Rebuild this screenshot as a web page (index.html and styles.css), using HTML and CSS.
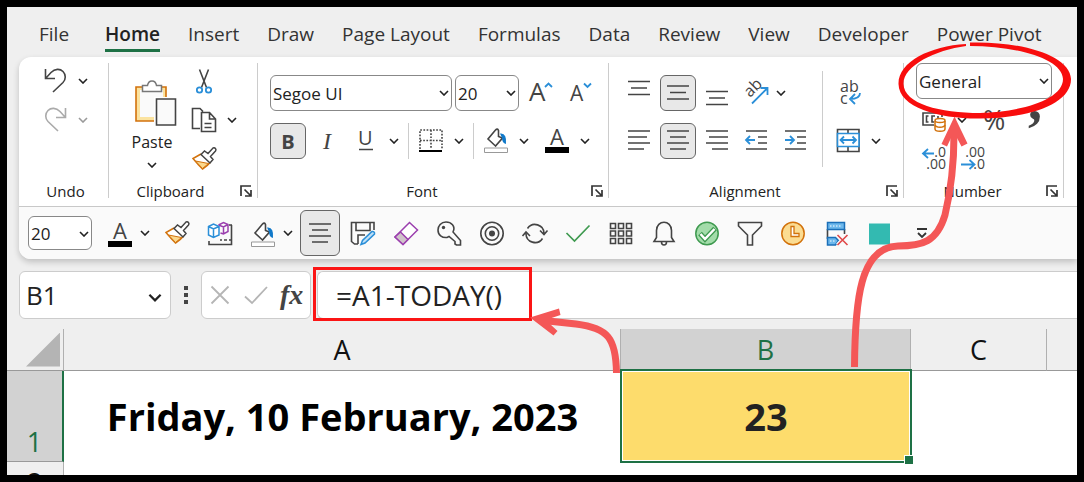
FILE: index.html
```
<!DOCTYPE html>
<html lang="en">
<head>
  <meta charset="UTF-8">
  <title>Excel - Days Until Date</title>
  <meta name="viewport" content="width=device-width, initial-scale=1.0">
  <link rel="stylesheet" href="styles.css">
</head>

<body>

<!-- icons used more than once -->
<svg class="sprite" aria-hidden="true">
  <symbol id="chevron" viewBox="0 0 10 6"><path d="M1 1l4 4 4-4" fill="none" stroke="currentColor" stroke-width="1.600"/></symbol>
  <symbol id="launcher" viewBox="0 0 12 12"><path d="M1 11V1h10M4.500 4.500l6 6M11 5v6H5" fill="none" stroke="#333" stroke-width="1.700"/></symbol>
  <symbol id="brush" viewBox="0 0 36 36">
    <path d="M15 13L7 17.500q5 6 9.500 10.500 5-3 8-7" fill="#fff" stroke="#d2720c" stroke-width="1.500"/>
    <path d="M9.500 20l13 2.500-6 5z" fill="#fbd98e" stroke="#d2720c"/>
    <path d="M15 13.500l3.500-3.500 3.500 2.500 5-5.500a2 2 0 0 1 2.500 3l-5 5.500 2.500 3-3 3.500z" fill="#fff" stroke="#444" stroke-width="1.500"/>
  </symbol>
  <symbol id="fill" viewBox="0 0 36 36">
    <path d="M17.500 23L10 16l7.500-9q2-2 3 .5v6l4 1.500z" fill="#fff" stroke="#444" stroke-width="1.600"/>
    <path d="M22 10.500q7-1 6 10.500-4-1-4-6z" fill="#1179c9"/>
    <path d="M6.500 25h23v4.500h-23z" fill="#fff" stroke="#999"/>
  </symbol>
  <symbol id="color" viewBox="0 0 36 36">
    <text x="11" y="22" font-size="22" fill="#444">A</text>
    <path d="M6 24h24v6H6z"/>
  </symbol>
</svg>

<div class="window">

  <nav class="tabs">
    <a href="#">File</a>
    <a href="#" class="current">Home</a>
    <a href="#">Insert</a>
    <a href="#">Draw</a>
    <a href="#">Page Layout</a>
    <a href="#">Formulas</a>
    <a href="#">Data</a>
    <a href="#">Review</a>
    <a href="#">View</a>
    <a href="#">Developer</a>
    <a href="#">Power Pivot</a>
  </nav>

  <div class="ribbon">
    <div class="groups">

      <section class="group undo">
        <div class="stack">
          <div class="row">
            <button class="tool" aria-label="Undo"><svg viewBox="0 0 36 36"><path d="M8.500 6v9.500h9.500M9 15l5-5.500c4-4 9-4 12-1s3 8 0 11L16 29" class="ink"/></svg></button>
            <button class="more" aria-label="Undo list"><svg><use href="#chevron"/></svg></button>
          </div>
          <div class="row faded">
            <button class="tool" aria-label="Redo"><svg viewBox="0 0 36 36"><path d="M28.500 6v9.500h-9.500M28 15l-5-5.500c-4-4-9-4-12-1s-3 8 0 11L21 29" class="ink"/></svg></button>
            <button class="more" aria-label="Redo list"><svg><use href="#chevron"/></svg></button>
          </div>
        </div>
        <div class="caption"><span>Undo</span></div>
      </section>

      <section class="group clipboard">
        <div class="row top">
          <button class="paste">
            <svg class="paste-icon" viewBox="0 0 44 46">
              <path d="M2 7h30v34H2z" fill="#fbe3a0" stroke="#d2720c" stroke-width="1.600"/>
              <path d="M6 10h23v27H6z" fill="#fafafa"/>
              <path d="M20 17h24v29H20z" fill="#fff"/>
              <path d="M8.500 5.500h5c1-6 8-6 9 0h5v6h-19z" fill="#fff" stroke="#777" stroke-width="1.500"/>
              <path d="M22.500 19h19v26h-19z" fill="#fafafa" stroke="#444" stroke-width="1.600"/>
            </svg>
            <span>Paste</span>
            <svg class="chev"><use href="#chevron"/></svg>
          </button>
          <div class="stack">
            <button class="tool" aria-label="Cut"><svg viewBox="0 0 36 36"><path d="M13.500 6.500l7 18M22.500 6.500l-7 18" class="ink"/><g class="blue"><circle cx="13.500" cy="27" r="2.700"/><circle cx="22.500" cy="27" r="2.700"/></g></svg></button>
            <div class="row">
              <button class="tool" aria-label="Copy"><svg viewBox="0 0 36 36"><path d="M14 26.500H6.500v-20h7.500l3 3M15.500 10.500h8l6 6.500v12.500h-14zM23.500 10.500V17h6M18.500 21.500h7M18.500 25.500h7" class="ink"/></svg></button>
              <button class="more" aria-label="Copy options"><svg><use href="#chevron"/></svg></button>
            </div>
            <button class="tool" aria-label="Format Painter"><svg><use href="#brush"/></svg></button>
          </div>
        </div>
        <div class="caption"><span>Clipboard</span><button class="launch" aria-label="Clipboard settings"><svg><use href="#launcher"/></svg></button></div>
      </section>

      <section class="group font">
        <div class="stack wide">
          <div class="row">
            <div class="combo family"><select aria-label="Font"><option>Segoe UI</option></select><svg><use href="#chevron"/></svg></div>
            <div class="combo size"><select aria-label="Font size"><option>20</option></select><svg><use href="#chevron"/></svg></div>
            <button class="tool" aria-label="Increase font size"><svg viewBox="0 0 36 36"><text x="7" y="26" font-size="26">A</text><path d="M23 12l3.500-3.500L30 12" class="blue"/></svg></button>
            <button class="tool" aria-label="Decrease font size"><svg viewBox="0 0 36 36"><text x="9" y="26" font-size="21">A</text><path d="M23 8.500l3.500 3.500L30 8.500" class="blue"/></svg></button>
          </div>
          <div class="row">
            <button class="tool on bold">B</button>
            <button class="tool italic">I</button>
            <div class="split"><button class="tool" aria-label="Underline"><svg viewBox="0 0 36 36"><text x="10" y="22" font-size="20">U</text><path d="M11 26.500h14" class="ink"/></svg></button><button class="more" aria-label="Underline options"><svg><use href="#chevron"/></svg></button></div>
            <i class="bar"></i>
            <div class="split"><button class="tool" aria-label="Borders"><svg viewBox="0 0 36 36"><path d="M7 26V7h22v19M18 7v19M7 17.500h22" fill="none" stroke="#444" stroke-width="1.600" stroke-dasharray="1.700 1.500"/><path d="M6 28h23" stroke="#000" stroke-width="2.200"/></svg></button><button class="more" aria-label="Border options"><svg><use href="#chevron"/></svg></button></div>
            <i class="bar"></i>
            <div class="split"><button class="tool" aria-label="Fill color"><svg><use href="#fill"/></svg></button><button class="more" aria-label="Fill options"><svg><use href="#chevron"/></svg></button></div>
            <div class="split last"><button class="tool" aria-label="Font color"><svg><use href="#color"/></svg></button><button class="more" aria-label="Color options"><svg><use href="#chevron"/></svg></button></div>
          </div>
        </div>
        <div class="caption"><span>Font</span><button class="launch" aria-label="Font settings"><svg><use href="#launcher"/></svg></button></div>
      </section>

      <section class="group alignment">
        <div class="row top">
          <div class="stack wide">
            <div class="row">
              <button class="tool" aria-label="Top align"><svg viewBox="0 0 36 36"><path d="M7 6.500h22M10 13h16M7 19.500h22" class="ink"/></svg></button>
              <button class="tool on" aria-label="Middle align"><svg viewBox="0 0 36 36"><path d="M7 11h22M10 17.500h16M7 24h22" class="ink"/></svg></button>
              <button class="tool" aria-label="Bottom align"><svg viewBox="0 0 36 36"><path d="M7 16.500h22M10 23h16M7 29.500h22" class="ink"/></svg></button>
              <div class="split"><button class="tool" aria-label="Orientation"><svg viewBox="0 0 36 36"><text transform="translate(12 23) rotate(-45)" font-size="16">ab</text><path d="M14 28.500l15-15M22.500 13H29.500V20" class="blue"/></svg></button><button class="more narrow" aria-label="Orientation options"><svg><use href="#chevron"/></svg></button></div>
            </div>
            <div class="row">
              <button class="tool" aria-label="Align left"><svg viewBox="0 0 36 36"><path d="M7 8h22M7 14h19M7 20h22M7 26h16" class="ink"/></svg></button>
              <button class="tool on" aria-label="Center"><svg viewBox="0 0 36 36"><path d="M7 8h22M10 14h16M7 20h22M10 26h16" class="ink"/></svg></button>
              <button class="tool" aria-label="Align right"><svg viewBox="0 0 36 36"><path d="M7 8h22M10 14h19M7 20h22M13 26h16" class="ink"/></svg></button>
              <button class="tool" aria-label="Decrease indent"><svg viewBox="0 0 36 36"><path d="M8 8h21M20 14h9M20 20h9M8 26h21" class="ink"/><path d="M17 17H9M12 13l-4 4 4 4" class="blue"/></svg></button>
              <button class="tool" aria-label="Increase indent"><svg viewBox="0 0 36 36"><path d="M8 8h21M20 14h9M20 20h9M8 26h21" class="ink"/><path d="M8 17h8M13 13l4 4-4 4" class="blue"/></svg></button>
            </div>
          </div>
          <i class="bar tall"></i>
          <div class="stack wide">
            <button class="tool" aria-label="Wrap text"><svg viewBox="0 0 36 36"><text x="10" y="17" font-size="16">ab</text><text x="10" y="29" font-size="16">c</text><path d="M30 18q0 6-10 6M25 19l-5 5 5 5" class="blue"/></svg></button>
            <div class="split"><button class="tool" aria-label="Merge and center"><svg viewBox="0 0 36 36"><path d="M7.500 6.500h21.500v22H7.500zM18 6.500v22" class="ink"/><path d="M7.500 10.500h21.500v13H7.500z" fill="#fff" stroke="#2b8fd8" stroke-width="1.600"/><path d="M11 17h14M14 13.500L10.500 17l3.500 3.500M22.500 13.500L26 17l-3.500 3.500" class="blue"/></svg></button><button class="more" aria-label="Merge options"><svg><use href="#chevron"/></svg></button></div>
          </div>
        </div>
        <div class="caption"><span>Alignment</span><button class="launch" aria-label="Alignment settings"><svg><use href="#launcher"/></svg></button></div>
      </section>

      <section class="group number">
        <div class="stack">
          <div class="combo format"><select aria-label="Number format"><option>General</option></select><svg><use href="#chevron"/></svg></div>
          <div class="row spaced">
            <div class="split"><button class="tool" aria-label="Accounting format"><svg viewBox="0 0 36 36"><path d="M26 15v-4H7v12h11" class="ink"/><path d="M12.500 14h-2v6h2M19 14h-3v6h2M22 14v3" class="ink"/><path d="M19 19v8c0 3 10 3 10 0v-8" fill="#fff" stroke="#d2720c" stroke-width="1.500"/><ellipse cx="24" cy="18.500" rx="5" ry="2" fill="#fff" stroke="#d2720c" stroke-width="1.500"/><path d="M19 23c1 3 9 3 10 0" fill="none" stroke="#d2720c" stroke-width="1.500"/></svg></button><button class="more" aria-label="Currency options"><svg><use href="#chevron"/></svg></button></div>
            <button class="tool" aria-label="Percent style"><svg viewBox="0 0 36 36"><text x="8" y="28" font-size="27">%</text></svg></button>
            <button class="tool" aria-label="Comma style"><svg viewBox="0 0 36 36"><text x="14" y="17" font-size="56" class="serif">,</text></svg></button>
          </div>
          <div class="row spaced">
            <button class="tool" aria-label="Increase decimal"><svg viewBox="0 0 36 36"><text x="30" y="16" font-size="14" text-anchor="end">.0</text><text x="30" y="28" font-size="14" text-anchor="end">.00</text><path d="M18 12.500H7.500M12 8l-5 4.500 5 4.500" class="blue"/></svg></button>
            <button class="tool" aria-label="Decrease decimal"><svg viewBox="0 0 36 36"><text x="30" y="16" font-size="14" text-anchor="end">.00</text><text x="30" y="28" font-size="14" text-anchor="end">.0</text><path d="M6 23.500h13M14.500 19l5 4.500-5 4.500" class="blue"/></svg></button>
          </div>
        </div>
        <div class="caption"><span>Number</span><button class="launch" aria-label="Number settings"><svg><use href="#launcher"/></svg></button></div>
      </section>

    </div>

    <div class="quick">
      <div class="combo size"><select aria-label="Quick font size"><option>20</option></select><svg><use href="#chevron"/></svg></div>
      <div class="split"><button class="tool" aria-label="Font color"><svg><use href="#color"/></svg></button><button class="more" aria-label="Color options"><svg><use href="#chevron"/></svg></button></div>
      <button class="tool" aria-label="Format Painter"><svg><use href="#brush"/></svg></button>
      <button class="tool" aria-label="Shapes"><svg viewBox="0 0 36 36">
        <path d="M7 26v3.500h22.500V10M27 10h3M18 25h12" class="ink" /><path d="M20 25h2M25 25h2" stroke="#fafafa" stroke-width="2"/>
        <path d="M16.500 10l5-2.500 4.500 2v7l-4.500 2.500-3-1M16.500 10l5 2 4.500-2.500M21.500 12v7" fill="none" stroke="#9b3fae" stroke-width="1.500"/>
        <path d="M6.500 11.500l5-2.500 5.500 2.500v8.500l-5.500 2.500-5-2.500zM6.500 11.500l5 2.500 5.500-2.500M11.500 14v8.500" fill="#fff" stroke="#2b8fd8" stroke-width="1.500"/>
      </svg></button>
      <div class="split"><button class="tool" aria-label="Fill color"><svg><use href="#fill"/></svg></button><button class="more" aria-label="Fill options"><svg><use href="#chevron"/></svg></button></div>
      <button class="tool on" aria-label="Center"><svg viewBox="0 0 36 36"><path d="M7 9h22M10 15h16M7 21h22M10 27h16" class="ink"/></svg></button>
      <button class="tool" aria-label="Save as"><svg viewBox="0 0 36 36"><path d="M29 15V7.500H6.500v19l3 2.500h3.500M11 8v7.500h14V8M13 29v-9h7" class="ink"/><path d="M27 16.500a2 2 0 0 1 2.500 2.500l-9.500 9-4 1.500 1.500-4z" fill="#bfe0f7" stroke="#2b8fd8" stroke-width="1.500"/></svg></button>
      <button class="tool" aria-label="Clear"><svg viewBox="0 0 36 36"><path d="M21.500 7.500l8 7.500L15 29.500l-8-7.500z" fill="#fff" stroke="#9b3fae" stroke-width="1.500"/><path d="M12.500 17l7.500 7.500-5 5-8-7.500z" fill="#d0c3ca" stroke="#9b3fae" stroke-width="1.500"/></svg></button>
      <button class="tool" aria-label="Protect"><svg viewBox="0 0 36 36"><path d="M22 17c3-6-2-10-7-10-5 0-8 4-8 8 0 5 4 8 9 7.500l2-1 6 5v2.500l1.500 1h4v-4.500z" class="ink"/><circle cx="12.500" cy="12.500" r="1.700" fill="#444"/></svg></button>
      <button class="tool" aria-label="Record"><svg viewBox="0 0 36 36"><g class="ink"><circle cx="18" cy="18.500" r="11.200"/><circle cx="18" cy="18.500" r="6.700"/></g><circle cx="18" cy="18.500" r="3" fill="#444"/></svg></button>
      <button class="tool" aria-label="Refresh"><svg viewBox="0 0 36 36"><path d="M10.500 13.500a9 9 0 0 1 16.500 5M25.500 23.500a9 9 0 0 1-16.500-5M23 15.500l4 4 3.500-4M5.500 21l3.500-4 4 4" class="ink"/></svg></button>
      <button class="tool" aria-label="Accept"><svg viewBox="0 0 36 36"><path d="M6.500 18l8 8L29.500 10.500" fill="none" stroke="#3f9a50" stroke-width="1.700"/></svg></button>
      <button class="tool" aria-label="Apps"><svg viewBox="0 0 36 36"><path d="M7.500 8.500h5v5h-5zM15.500 8.500h5v5h-5zM23.500 8.500h5v5h-5zM7.500 16h5v5h-5zM15.500 16h5v5h-5zM23.500 16h5v5h-5zM7.500 23.500h5v5h-5zM15.500 23.500h5v5h-5zM23.500 23.500h5v5h-5z" class="ink"/></svg></button>
      <button class="tool" aria-label="Alerts"><svg viewBox="0 0 36 36"><path d="M8 26.500h20l-2.500-4v-7c0-11-15-11-15 0v7zM15.500 27c0 4 5 4 5 0" class="ink"/></svg></button>
      <button class="tool" aria-label="Approve"><svg viewBox="0 0 36 36"><circle cx="18" cy="18.500" r="11.200" fill="#a3dcaa" stroke="#3f9a50" stroke-width="1.500"/><path d="M11 18.500l5 5.500 10-10.500" fill="none" stroke="#3f9a50" stroke-width="5"/><path d="M11.500 19l4.500 5 9.500-10" fill="none" stroke="#fff" stroke-width="2.500"/></svg></button>
      <button class="tool" aria-label="Filter"><svg viewBox="0 0 36 36"><path d="M6.500 7.500h23v3.500l-9 9v10h-5V20l-9-9z" class="ink"/></svg></button>
      <button class="tool" aria-label="Recent"><svg viewBox="0 0 36 36"><circle cx="18" cy="18.500" r="11.200" fill="#fbdc92" stroke="#d2720c" stroke-width="1.500"/><path d="M16 11.500h3v7h5v3h-8z" fill="#fff" stroke="#d2720c" stroke-width="1.300"/></svg></button>
      <button class="tool" aria-label="Delete rows"><svg viewBox="0 0 36 36"><path d="M9.500 14v10M26.500 14v5" class="ink"/><path d="M9.500 7.500h17v7h-17zM9.500 22.500h8l3 3-3 4.500h-8z" fill="#6db8ec" stroke="#1b6fb8" stroke-width="1.500"/><path d="M12 11h12M12 26h5" stroke="#fff" stroke-dasharray="1.500 1.500"/><path d="M19.500 20l10 10M29.500 20l-10 10" stroke="#fafafa" stroke-width="4"/><path d="M19.500 20l10 10M29.500 20l-10 10" stroke="#e04848" stroke-width="1.600"/></svg></button>
      <button class="tool" aria-label="Cell color"><svg viewBox="0 0 36 36"><path d="M8 8.500h21v21H8z" fill="#33bab1"/></svg></button>
      <button class="tool" aria-label="Customize toolbar"><svg viewBox="0 0 36 36"><path d="M13 14h10M14 18l4 4 4-4" fill="none" stroke="#333" stroke-width="1.800"/></svg></button>
    </div>
  </div>

  <div class="formula-bar">
    <div class="name-box"><input value="B1" aria-label="Name box"><svg><use href="#chevron"/></svg></div>
    <span class="dots"><i></i><i></i><i></i></span>
    <div class="fx-box">
      <button aria-label="Cancel"><svg viewBox="0 0 24 24"><path d="M3.500 3.500l17 17M20.500 3.500l-17 17"/></svg></button>
      <button aria-label="Enter"><svg viewBox="0 0 24 24"><path d="M1 13.500l7 6.500L23 4"/></svg></button>
      <button class="fx">fx</button>
    </div>
    <input class="formula" value="=A1-TODAY()" aria-label="Formula">
  </div>

  <table class="sheet">
    <colgroup>
      <col class="c-head"><col class="c-a"><col class="c-b"><col class="c-c"><col>
    </colgroup>
    <thead>
      <tr>
        <th class="corner"><i></i></th>
        <th>A</th>
        <th class="picked">B</th>
        <th>C</th>
        <th></th>
      </tr>
    </thead>
    <tbody>
      <tr class="first">
        <th class="picked">1</th>
        <td>Friday, 10 February, 2023</td>
        <td class="active">23<span class="cursor"></span></td>
        <td></td>
        <td></td>
      </tr>
      <tr>
        <th>2</th>
        <td></td>
        <td></td>
        <td></td>
        <td></td>
      </tr>
    </tbody>
  </table>

  <!-- hand drawn marks over the sheet -->
  <svg class="marks" viewBox="0 0 1070 468" aria-hidden="true">
    <g transform="translate(-7 -7)">
      <path d="M314.500 268.500h216v51h-216z" fill="none" stroke="#fb1515" stroke-width="3"/>
      <path d="M966 44C930 46 898 62 898.500 84C899 108 940 119 980 118.500C1030 118 1071 104 1071 79C1070 55 1020 41 970 42.500V46C1015 46 1062 58 1063 79C1063 100 1020 112 980 113C940 113 904 104 903.500 84C903 66 935 50 966 46Z" fill="#f80d0d"/>
      <g fill="none" stroke="#f45757" stroke-width="7">
        <path d="M616.500 373C616 338 608 328 576 324L548 321"/>
        <path d="M854.500 367C855 300 860 247 898 246C922 246 937 242 945 215C951 190 954 160 954 134"/>
      </g>
      <path d="M530 317.500L559 308.500L560.500 315L550 318.500V324L557.500 331L553.500 335.500Z" fill="#f45757"/>
      <path d="M954.500 116.500L967.500 143.500L961.500 146.500L957 138H951L947 146.500L941.500 144Z" fill="#f45757"/>
    </g>
  </svg>

</div>

</body>
</html>
```
FILE: styles.css
```
* {
  margin: 0;
  padding: 0;
  box-sizing: border-box;
  font-family: "Segoe UI", "Open Sans", "Noto Sans", sans-serif;
}

body {
  background: #000;
  color: #222;
}

.sprite {
  position: absolute;
  width: 0;
  height: 0;
}

.window {
  position: relative;
  height: calc(100vh - 14px);
  margin: 7px;
  background: #efefef;
  overflow: hidden;
}

button {
  border: none;
  background: none;
  color: #444;
}

svg text {
  fill: #444;
}

svg .serif {
  font-family: "Liberation Serif", serif;
  font-weight: bold;
}

.ink {
  fill: none;
  stroke: #444;
  stroke-width: 1.6;
}

.blue {
  fill: none;
  stroke: #2b8fd8;
  stroke-width: 1.8;
}

/* tabs */

.tabs {
  display: flex;
  gap: 28px;
  height: 50px;
  padding: 12px 0 0 32px;
}

.tabs a {
  height: 33px;
  font-size: 19px;
  line-height: 30px;
  color: #333;
  text-decoration: none;
  white-space: nowrap;
}

.tabs .current {
  margin-left: 8px;
  font-weight: 600;
  color: #222;
  border-bottom: 3px solid #1e7145;
}

/* ribbon */

.ribbon {
  margin-left: 12px;
  background: #fff;
  border-radius: 12px 0 0 12px;
  box-shadow: 0 3px 6px rgba(0, 0, 0, 0.2);
  overflow: hidden;
}

.groups {
  display: flex;
  padding: 6px 0 8px;
  border-bottom: 1px solid #c8c8c8;
}

.group {
  display: flex;
  flex-direction: column;
  justify-content: space-between;
  flex: none;
  height: 135px;
  padding-left: 12px;
  border-right: 1px solid #ccc;
}

.undo { width: 90px; padding-left: 18px; }
.clipboard { width: 149px; padding-left: 9px; }
.font { width: 351px; padding-top: 12px; }
.alignment { width: 295px; padding-top: 12px; }
.number { width: 160px; }

.row, .split {
  display: flex;
  align-items: center;
}

.font .row, .alignment .row, .spaced {
  gap: 3px;
}

.top {
  align-items: stretch;
}

.stack {
  display: flex;
  flex-direction: column;
  gap: 3px;
}

.wide {
  gap: 12px;
}

.faded {
  opacity: 0.45;
}

.last {
  margin-left: 2px;
}

.tool {
  flex: none;
  width: 36px;
  height: 36px;
}

.tool svg {
  display: block;
  width: 36px;
  height: 36px;
  overflow: visible;
}

.on {
  background: #e8e8e8;
  border: 1px solid #666;
  border-radius: 6px;
}

.on svg {
  margin: -1px;
}

.bold {
  font-size: 20px;
  font-weight: bold;
}

.italic {
  font-family: "Liberation Serif", serif;
  font-size: 24px;
  font-style: italic;
}

.more {
  width: 20px;
  height: 36px;
  color: #222;
}

.narrow {
  width: 14px;
}

.more svg, .chev {
  display: block;
  width: 10px;
  height: 6px;
  margin: 0 auto;
}

.bar {
  width: 1px;
  height: 36px;
  margin: 0 1px;
  background: #ccc;
}

.tall {
  height: auto;
  margin: -4px 4px -8px 6px;
}

.paste {
  width: 68px;
  padding-top: 7px;
  font-size: 16px;
  line-height: 24px;
  color: #222;
}

.paste span {
  display: block;
  margin: 4px 0 8px;
}

.paste-icon {
  display: block;
  width: 44px;
  height: 46px;
  margin: 0 auto 0 16px;
}

.caption {
  display: flex;
  align-items: center;
  height: 14px;
  margin-left: -12px;
  font-size: 15px;
  line-height: 16px;
}

.undo .caption { margin-left: -14px; }

.caption span {
  flex: 1;
  text-align: center;
}

.launch {
  width: 22px;
  height: 12px;
}

.launch svg {
  display: block;
  width: 12px;
  height: 12px;
  margin-left: 5px;
}

.combo {
  position: relative;
}

.combo select {
  width: 100%;
  height: 36px;
  padding-left: 2px;
  font-size: 17px;
  color: #222;
  background: #fff;
  border: 1px solid #888;
  border-radius: 6px;
  appearance: none;
}

.combo svg {
  position: absolute;
  right: 3px;
  top: 15px;
  width: 10px;
  height: 6px;
}

.family { width: 182px; }
.size { width: 64px; }
.format { width: 136px; }

/* quick access bar */

.quick {
  display: flex;
  align-items: center;
  gap: 3px;
  height: 52px;
  padding-left: 9px;
  background: #fafafa;
}

.quick .combo {
  margin-right: 5px;
}

.quick .combo select {
  height: 34px;
}

.quick .split {
  margin: 0 2px;
}

.quick .split .tool {
  height: 32px;
}

.quick > .tool {
  width: 40px;
  height: 46px;
  padding: 2px;
}

.quick > .on svg {
  margin: 0 -1px;
}

.quick .more {
  width: 14px;
}

/* formula bar */

.formula-bar {
  display: flex;
  align-items: center;
  height: 48px;
  margin: 12px 0 10px 12px;
}

.name-box, .fx-box, .formula {
  height: 48px;
  background: #fff;
  border: 1px solid #ccc;
  border-radius: 6px;
}

.name-box {
  position: relative;
  width: 152px;
}

.name-box input {
  width: 110px;
  height: 46px;
  padding-left: 6px;
  border: none;
  background: none;
  font-size: 26px;
  color: #222;
}

.name-box svg {
  position: absolute;
  right: 8px;
  top: 21px;
  width: 14px;
  height: 9px;
}

.dots {
  display: flex;
  flex-direction: column;
  align-items: center;
  gap: 3px;
  width: 30px;
}

.dots i {
  width: 4px;
  height: 4px;
  background: #444;
}

.fx-box {
  display: flex;
  align-items: center;
  gap: 12px;
  width: 110px;
  margin-right: 6px;
  padding-left: 6px;
}

.fx-box svg {
  display: block;
  width: 24px;
  height: 24px;
  fill: none;
  stroke: #b5b5b5;
  stroke-width: 1.8;
}

.fx {
  font-family: "Liberation Serif", serif;
  font-size: 28px;
  font-style: italic;
  font-weight: bold;
}

.formula {
  flex: 1;
  min-width: 0;
  padding-left: 18px;
  border-right: none;
  border-radius: 6px 0 0 6px;
  font-size: 28px;
  color: #222;
}

/* sheet */

.sheet {
  width: 100%;
  table-layout: fixed;
  border-collapse: separate;
  border-spacing: 0;
  background: #fff;
}

.c-head { width: 57px; }
.c-a { width: 557px; }
.c-b { width: 290px; }
.c-c { width: 136px; }

.sheet th {
  height: 42px;
  background: #efefef;
  border-right: 1px solid #b0b0b0;
  border-bottom: 1px solid #999;
  font-size: 27px;
  font-weight: normal;
  line-height: 34px;
  color: #111;
}

.sheet th:last-child {
  border-right: none;
}

.corner i {
  display: block;
  width: 34px;
  height: 34px;
  margin-left: 19px;
  background: #b4b4b4;
  clip-path: polygon(100% 0, 100% 100%, 0 100%);
}

.sheet .picked {
  background: #d2d2d2;
  color: #1e7145;
}

.first th {
  height: 91px;
  padding-bottom: 2px;
  vertical-align: bottom;
  border-right: 2px solid #1e7145;
}

.first td {
  font-size: 38px;
  font-weight: bold;
  line-height: 88px;
  padding-bottom: 2px;
  text-align: center;
  white-space: nowrap;
  color: #000;
}

.sheet .active {
  position: relative;
  background: #fddc6c;
  color: #222;
}

/* selection frame with its fill handle */
.cursor {
  position: absolute;
  inset: -2px -1px -1px -1px;
  border: 2px solid #1e7145;
  box-shadow: inset 0 0 0 1px #fff;
}

.cursor::after {
  content: "";
  position: absolute;
  right: -4px;
  bottom: -4px;
  width: 8px;
  height: 8px;
  background: #1e7145;
  border: 1px solid #fff;
}

.marks {
  position: absolute;
  left: 0;
  top: 0;
  width: 1070px;
  height: 468px;
  pointer-events: none;
}
```
